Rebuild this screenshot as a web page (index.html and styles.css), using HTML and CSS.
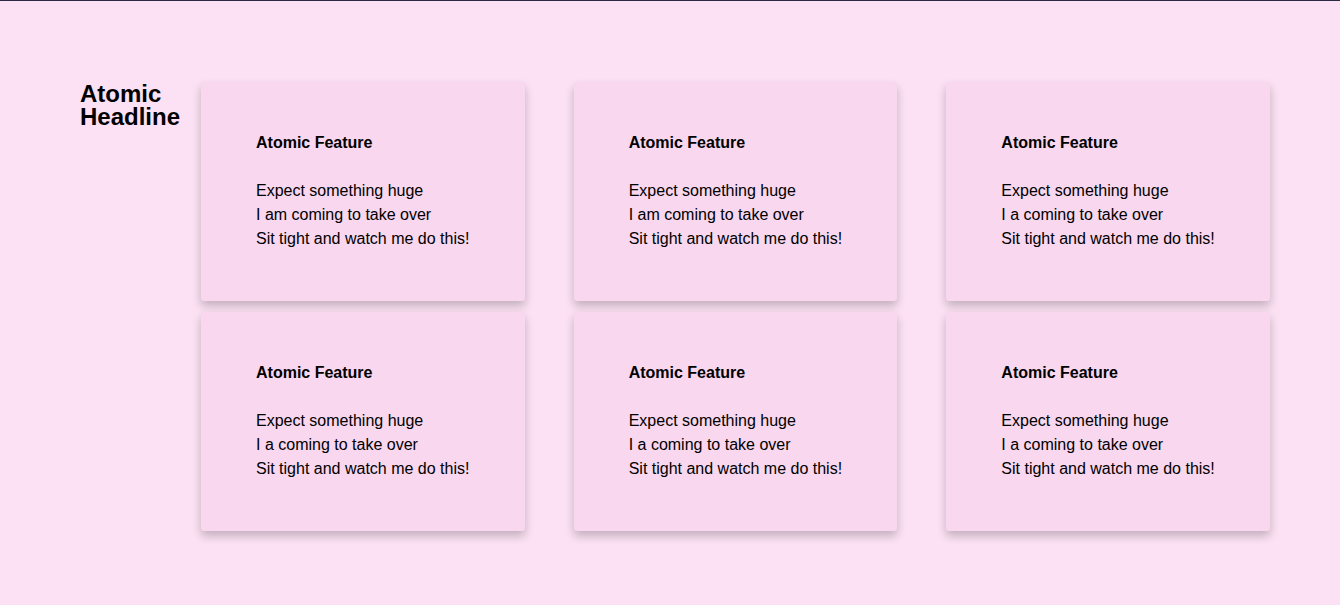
FILE: index.html
```html
<!DOCTYPE html>
<html lang="en">
<head>
<meta charset="utf-8">
<title>Atomic</title>
<link rel="stylesheet" href="styles.css">
</head>
<body>
<main class="page">
  <h1 class="headline">Atomic Headline</h1>
  <section class="grid">
    <article class="card">
      <h2 class="card-title">Atomic Feature</h2>
      <p class="card-text">Expect something huge<br>I am coming to take over<br>Sit tight and watch me do this!</p>
    </article>
    <article class="card">
      <h2 class="card-title">Atomic Feature</h2>
      <p class="card-text">Expect something huge<br>I am coming to take over<br>Sit tight and watch me do this!</p>
    </article>
    <article class="card">
      <h2 class="card-title">Atomic Feature</h2>
      <p class="card-text">Expect something huge<br>I a coming to take over<br>Sit tight and watch me do this!</p>
    </article>
    <article class="card">
      <h2 class="card-title">Atomic Feature</h2>
      <p class="card-text">Expect something huge<br>I a coming to take over<br>Sit tight and watch me do this!</p>
    </article>
    <article class="card">
      <h2 class="card-title">Atomic Feature</h2>
      <p class="card-text">Expect something huge<br>I a coming to take over<br>Sit tight and watch me do this!</p>
    </article>
    <article class="card">
      <h2 class="card-title">Atomic Feature</h2>
      <p class="card-text">Expect something huge<br>I a coming to take over<br>Sit tight and watch me do this!</p>
    </article>
  </section>
</main>
</body>
</html>
```
FILE: styles.css
```css
html, body {
  margin: 0;
  padding: 0;
}
body {
  background: #fbe1f3;
  border-top: 1px solid #2b2a45;
  font-family: "Liberation Sans", Arial, sans-serif;
  color: #000;
  min-height: 604px;
}
.page {
  display: flex;
  align-items: flex-start;
  padding: 81px 0 0 80px;
}
.headline {
  width: 121px;
  flex: none;
  margin: 0;
  font-size: 24px;
  line-height: 23px;
  font-weight: 700;
}
.grid {
  width: 1069px;
  display: grid;
  grid-template-columns: repeat(3, 1fr);
  column-gap: 49px;
  row-gap: 11px;
}
.card {
  background: #f8d7ef;
  border-radius: 3px;
  box-shadow: 0 5px 10px rgba(0, 0, 0, 0.22);
  padding: 49px 55px 50px;
  height: 219px;
  box-sizing: border-box;
}
.card-title {
  margin: 0 0 24px;
  font-size: 16px;
  line-height: 24px;
  font-weight: 700;
}
.card-text {
  margin: 0;
  font-size: 16px;
  line-height: 24px;
}
```
